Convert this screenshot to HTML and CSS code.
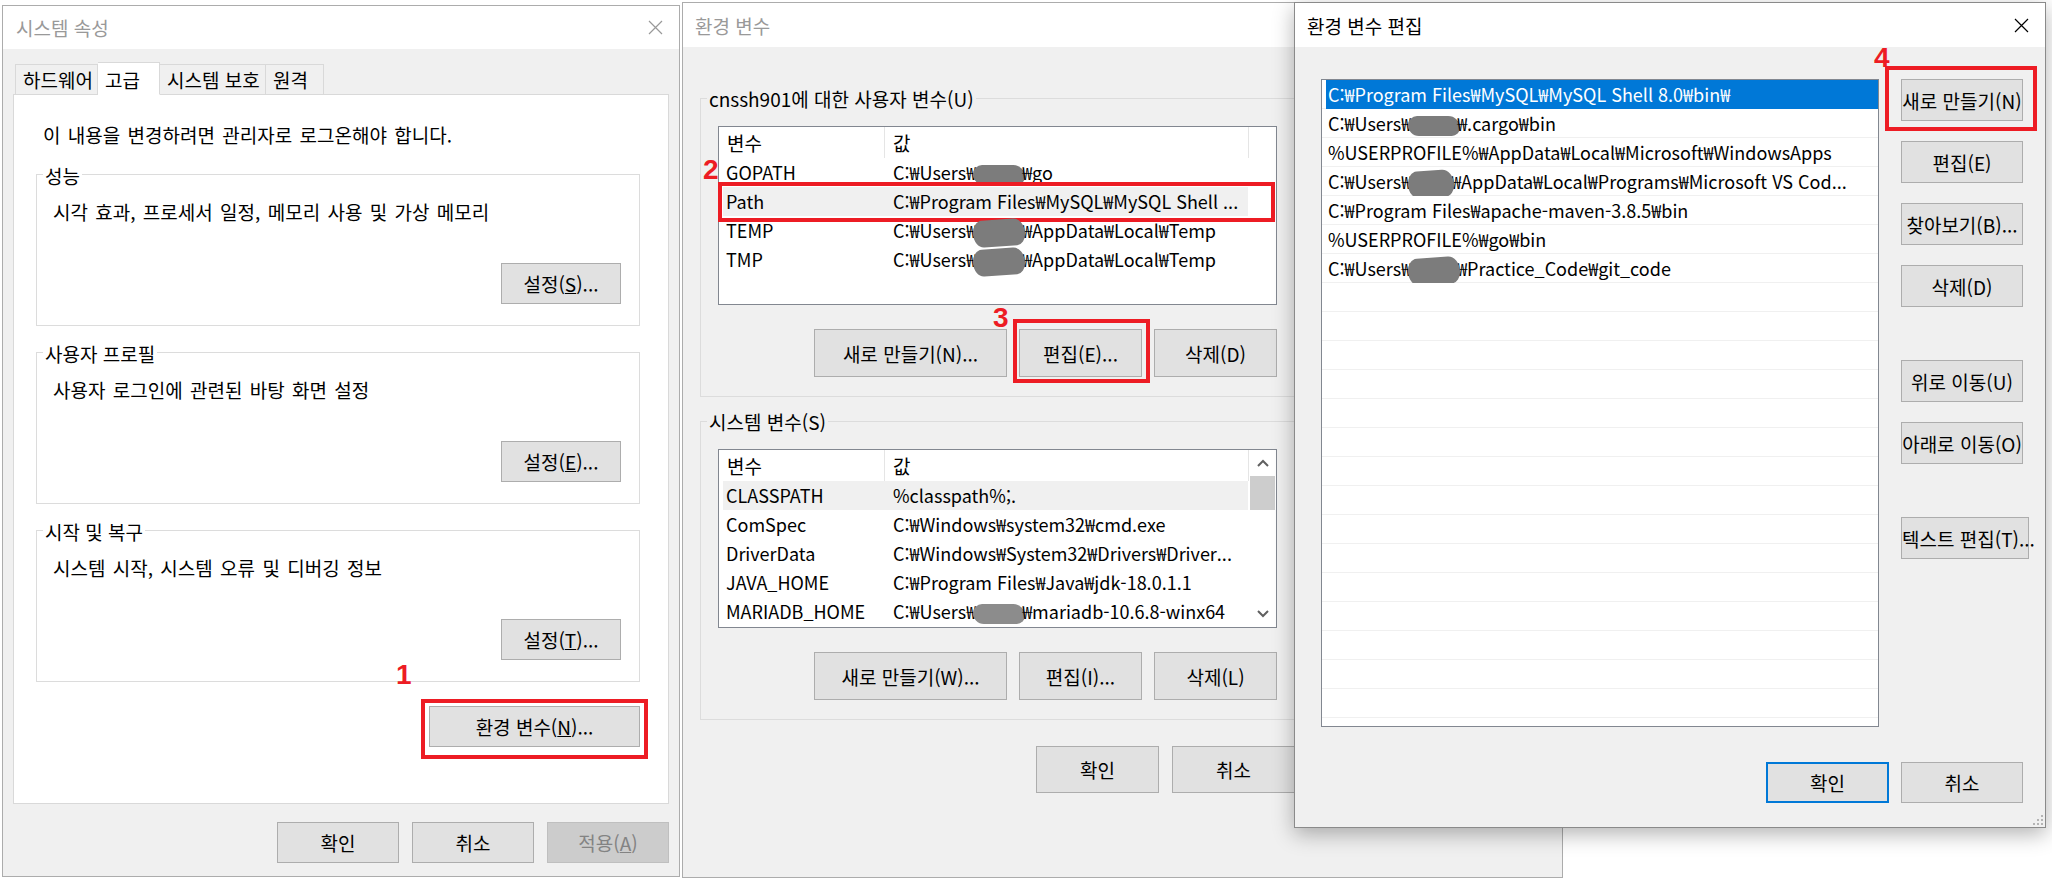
FILE: index.html
```html
<!DOCTYPE html>
<html lang="ko">
<head>
  <meta charset="UTF-8" />
  <title>환경 변수 편집</title>
  <link rel="stylesheet" href="styles.css">
</head>
<body>
<div class="desktop">

  <!-- 시스템 속성 -->
  <section class="win win-system">
    <header class="titlebar">
      <span class="title">시스템 속성</span>
      <svg class="close" viewBox="0 0 15 15"><path d="M1 1L14 14M14 1L1 14" stroke="currentColor" stroke-width="1.2" fill="none"/></svg>
    </header>
    <div class="sys-body">
      <div class="tabs">
        <div class="tab tab-hw">하드웨어</div>
        <div class="tab tab-adv is-active">고급</div>
        <div class="tab tab-protect">시스템 보호</div>
        <div class="tab tab-remote">원격</div>
      </div>
      <div class="tab-panel">
        <p class="intro">이 내용을 변경하려면 관리자로 로그온해야 합니다.</p>

        <div class="group sys-group">
          <span class="group-label">성능</span>
          <p class="group-desc">시각 효과, 프로세서 일정, 메모리 사용 및 가상 메모리</p>
          <div class="group-actions"><button class="btn btn-settings">설정(<u>S</u>)...</button></div>
        </div>

        <div class="group sys-group">
          <span class="group-label">사용자 프로필</span>
          <p class="group-desc">사용자 로그인에 관련된 바탕 화면 설정</p>
          <div class="group-actions"><button class="btn btn-settings">설정(<u>E</u>)...</button></div>
        </div>

        <div class="group sys-group">
          <span class="group-label">시작 및 복구</span>
          <p class="group-desc">시스템 시작, 시스템 오류 및 디버깅 정보</p>
          <div class="group-actions"><button class="btn btn-settings">설정(<u>T</u>)...</button></div>
        </div>

        <div class="env-row">
          <button class="btn btn-env mark mark-env">환경 변수(<u>N</u>)...<span class="step">1</span></button>
        </div>
      </div>
      <div class="dialog-buttons">
        <button class="btn btn-dialog">확인</button>
        <button class="btn btn-dialog">취소</button>
        <button class="btn btn-dialog" disabled>적용(<u>A</u>)</button>
      </div>
    </div>
  </section>

  <!-- 환경 변수 -->
  <section class="win win-env">
    <header class="titlebar">
      <span class="title">환경 변수</span>
    </header>
    <div class="env-body">
      <div class="env-col">

        <div class="group env-group">
          <span class="group-label">cnssh901에 대한 사용자 변수(U)</span>
          <div class="var-list">
            <div class="var-table">
              <div class="var-head"><span class="cell-name">변수</span><span class="cell-value">값</span></div>
              <div class="var-row"><span class="cell-name">GOPATH</span><span class="cell-value">C:₩Users₩<span class="blob"></span>₩go</span></div>
              <div class="var-row is-selected mark mark-row"><span class="cell-name">Path</span><span class="cell-value">C:₩Program Files₩MySQL₩MySQL Shell ...</span><span class="step">2</span></div>
              <div class="var-row"><span class="cell-name">TEMP</span><span class="cell-value">C:₩Users₩<span class="blob blob-tall"></span>₩AppData₩Local₩Temp</span></div>
              <div class="var-row"><span class="cell-name">TMP</span><span class="cell-value">C:₩Users₩<span class="blob blob-tall"></span>₩AppData₩Local₩Temp</span></div>
            </div>
          </div>
          <div class="list-actions">
            <button class="btn btn-wide">새로 만들기(N)...</button>
            <button class="btn mark mark-edit">편집(E)...<span class="step">3</span></button>
            <button class="btn">삭제(D)</button>
          </div>
        </div>

        <div class="group env-group">
          <span class="group-label">시스템 변수(S)</span>
          <div class="var-list">
            <div class="var-table">
              <div class="var-head"><span class="cell-name">변수</span><span class="cell-value">값</span></div>
              <div class="var-row is-selected"><span class="cell-name">CLASSPATH</span><span class="cell-value">%classpath%;.</span></div>
              <div class="var-row"><span class="cell-name">ComSpec</span><span class="cell-value">C:₩Windows₩system32₩cmd.exe</span></div>
              <div class="var-row"><span class="cell-name">DriverData</span><span class="cell-value">C:₩Windows₩System32₩Drivers₩Driver...</span></div>
              <div class="var-row"><span class="cell-name">JAVA_HOME</span><span class="cell-value">C:₩Program Files₩Java₩jdk-18.0.1.1</span></div>
              <div class="var-row"><span class="cell-name">MARIADB_HOME</span><span class="cell-value">C:₩Users₩<span class="blob blob-light"></span>₩mariadb-10.6.8-winx64</span></div>
            </div>
            <div class="scrollbar">
              <div class="scroll-arrow"><svg viewBox="0 0 12 8"><path d="M1 7L6 2L11 7" stroke="#606060" stroke-width="2" fill="none"/></svg></div>
              <div class="scroll-thumb"></div>
              <div class="scroll-track"></div>
              <div class="scroll-arrow"><svg viewBox="0 0 12 8"><path d="M1 1L6 6L11 1" stroke="#606060" stroke-width="2" fill="none"/></svg></div>
            </div>
          </div>
          <div class="list-actions">
            <button class="btn btn-wide">새로 만들기(W)...</button>
            <button class="btn">편집(I)...</button>
            <button class="btn">삭제(L)</button>
          </div>
        </div>

        <div class="env-footer">
          <button class="btn">확인</button>
          <button class="btn">취소</button>
        </div>
      </div>
    </div>
  </section>

  <!-- 환경 변수 편집 -->
  <section class="win win-edit">
    <header class="titlebar">
      <span class="title">환경 변수 편집</span>
      <svg class="close" viewBox="0 0 15 15"><path d="M1 1L14 14M14 1L1 14" stroke="currentColor" stroke-width="1.2" fill="none"/></svg>
    </header>
    <div class="edit-body">
      <div class="edit-main">
        <div class="path-list">
          <div class="path-row is-selected">C:₩Program Files₩MySQL₩MySQL Shell 8.0₩bin₩</div>
          <div class="path-row">C:₩Users₩<span class="blob"></span>₩.cargo₩bin</div>
          <div class="path-row">%USERPROFILE%₩AppData₩Local₩Microsoft₩WindowsApps</div>
          <div class="path-row">C:₩Users₩<span class="blob blob-tall blob-narrow"></span>₩AppData₩Local₩Programs₩Microsoft VS Cod...</div>
          <div class="path-row">C:₩Program Files₩apache-maven-3.8.5₩bin</div>
          <div class="path-row">%USERPROFILE%₩go₩bin</div>
          <div class="path-row">C:₩Users₩<span class="blob blob-tall"></span>₩Practice_Code₩git_code</div>
        </div>
        <div class="edit-actions">
          <button class="btn mark mark-new">새로 만들기(N)<span class="step">4</span></button>
          <button class="btn">편집(E)</button>
          <button class="btn">찾아보기(B)...</button>
          <button class="btn">삭제(D)</button>
          <button class="btn push">위로 이동(U)</button>
          <button class="btn">아래로 이동(O)</button>
          <button class="btn push btn-text">텍스트 편집(T)...</button>
        </div>
      </div>
      <div class="edit-footer">
        <button class="btn btn-default">확인</button>
        <button class="btn">취소</button>
      </div>
    </div>
    <svg class="grip" viewBox="0 0 11 11">
      <rect x="9" y="1" width="2" height="2" fill="#b4b4b4"/>
      <rect x="5" y="5" width="2" height="2" fill="#b4b4b4"/>
      <rect x="9" y="5" width="2" height="2" fill="#b4b4b4"/>
      <rect x="1" y="9" width="2" height="2" fill="#b4b4b4"/>
      <rect x="5" y="9" width="2" height="2" fill="#b4b4b4"/>
      <rect x="9" y="9" width="2" height="2" fill="#b4b4b4"/>
    </svg>
  </section>

</div>
</body>
</html>
```

FILE: styles.css
```css
* {
  box-sizing: border-box;
}
body {
  margin: 0;
  width: 2052px;
  height: 886px;
  overflow: hidden;
  background: #fff;
  color: #000;
  font-family: "Noto Sans CJK KR", "Noto Sans", sans-serif;
  font-size: 19px;
}
p {
  margin: 0;
}
.desktop {
  position: relative;
  width: 2052px;
  height: 886px;
}

/* windows */
.win {
  position: absolute;
  display: flex;
  flex-direction: column;
  background: #f0f0f0;
  border: 1px solid #acacac;
}
.win-system {
  left: 2px;
  top: 5px;
  width: 678px;
  height: 872px;
}
.win-env {
  left: 682px;
  top: 2px;
  width: 881px;
  height: 876px;
}
.win-edit {
  left: 1294px;
  top: 2px;
  width: 752px;
  height: 826px;
  border-color: #8a8a8a;
  box-shadow: 0 6px 20px rgba(0, 0, 0, 0.3);
}
.titlebar {
  flex: none;
  height: 44px;
  display: flex;
  align-items: center;
  justify-content: space-between;
  padding: 0 16px 0 12px;
  background: #fff;
  color: #999;
}
.win-system .titlebar {
  height: 43px;
  padding-left: 13px;
}
.win-edit .titlebar {
  color: #000;
}
.close {
  width: 15px;
  height: 15px;
}

/* buttons */
.btn {
  height: 41px;
  padding: 0;
  border: 1px solid #adadad;
  background: #e1e1e1;
  color: #000;
  font: inherit;
  white-space: nowrap;
}
.btn:disabled {
  background: #cccccc;
  border-color: #bfbfbf;
  color: #838383;
}
.btn-default {
  border: 2px solid #0078d7;
}

/* group boxes */
.group {
  position: relative;
  border: 1px solid #dcdcdc;
}
.group-label {
  position: absolute;
  top: -10px;
  left: 6px;
  padding: 0 2px;
  line-height: 22px;
  background: #fff;
  white-space: nowrap;
}

/* 시스템 속성 */
.sys-body {
  flex: 1;
  display: flex;
  flex-direction: column;
  padding: 13px 10px 0;
}
.tabs {
  position: relative;
  z-index: 1;
  display: flex;
  align-items: flex-end;
  height: 33px;
  margin-bottom: -1px;
  padding-left: 2px;
}
.tab {
  height: 31px;
  padding-left: 7px;
  line-height: 29px;
  background: #f0f0f0;
  border: 1px solid #d9d9d9;
  border-left: none;
  white-space: nowrap;
}
.tab:first-child {
  border-left: 1px solid #d9d9d9;
}
.tab.is-active {
  height: 33px;
  padding-top: 2px;
  background: #fff;
  border-bottom-color: #fff;
}
.tab-hw { width: 83px; }
.tab-adv { width: 62px; }
.tab-protect { width: 106px; }
.tab-remote { width: 58px; }

.tab-panel {
  height: 710px;
  padding: 27px 28px 0 22px;
  background: #fff;
  border: 1px solid #d9d9d9;
}
.intro,
.group-desc {
  word-spacing: 2px;
}
.intro {
  margin: 0 0 3px 7px;
  line-height: 26px;
}
.sys-group {
  margin-top: 26px;
  padding: 24px 18px 21px 16px;
}
.group-desc {
  line-height: 26px;
}
.group-actions,
.env-row {
  display: flex;
  justify-content: flex-end;
}
.group-actions {
  margin-top: 38px;
}
.btn-settings {
  width: 120px;
}
.env-row {
  margin-top: 24px;
}
.btn-env {
  width: 211px;
}
.dialog-buttons {
  display: flex;
  justify-content: flex-end;
  gap: 13px;
  margin-top: 18px;
}
.btn-dialog {
  width: 122px;
}

/* 환경 변수 */
.env-body {
  padding: 51px 0 0 17px;
}
.env-col {
  width: 595px;
}
.env-group {
  padding: 27px 17px 19px;
}
.env-group + .env-group {
  margin-top: 24px;
}
.env-group .group-label {
  top: -11px;
  background: #f0f0f0;
}
.var-list {
  position: relative;
  display: flex;
  height: 179px;
  background: #fff;
  border: 1px solid #828790;
}
.var-table {
  flex: 1;
}
.var-head {
  display: flex;
  height: 31px;
  line-height: 31px;
}
.var-head .cell-name {
  width: 166px;
  padding-left: 8px;
  border-right: 1px solid #e5e5e5;
}
.var-head .cell-value {
  width: 364px;
  padding-left: 8px;
  border-right: 1px solid #e5e5e5;
}
.var-row {
  display: flex;
  width: 525px;
  height: 29px;
  margin-left: 4px;
  font-size: 18px;
  line-height: 29px;
  white-space: nowrap;
}
.var-row .cell-name {
  width: 162px;
  padding-left: 3px;
}
.var-row .cell-value {
  width: 363px;
  padding-left: 8px;
}
.var-row.is-selected {
  background: #f0f0f0;
}
.scrollbar {
  display: flex;
  flex-direction: column;
  width: 27px;
  background: #fff;
}
.scroll-arrow {
  display: flex;
  align-items: center;
  justify-content: center;
  height: 26px;
}
.scroll-arrow svg {
  width: 12px;
  height: 8px;
}
.scroll-thumb {
  height: 34px;
  margin: 0 1px;
  background: #cdcdcd;
}
.scroll-track {
  flex: 1;
}
.list-actions {
  display: flex;
  justify-content: flex-end;
  gap: 12px;
  margin-top: 24px;
}
.list-actions .btn {
  width: 123px;
  height: 48px;
}
.list-actions .btn-wide {
  width: 193px;
}
.env-footer {
  display: flex;
  justify-content: flex-end;
  gap: 13px;
  margin-top: 26px;
}
.env-footer .btn {
  width: 123px;
  height: 47px;
}

/* 환경 변수 편집 */
.edit-body {
  flex: 1;
  display: flex;
  flex-direction: column;
  padding: 32px 22px 0 26px;
}
.edit-main {
  display: flex;
  gap: 22px;
}
.path-list {
  width: 558px;
  height: 648px;
  border: 1px solid #828790;
  background: repeating-linear-gradient(#fff 0 28px, #f0f0f0 28px 29px);
}
.path-row {
  height: 29px;
  margin-left: 4px;
  padding-left: 2px;
  font-size: 18px;
  line-height: 29px;
  white-space: nowrap;
  overflow: hidden;
}
.path-row.is-selected {
  background: #0078d7;
  color: #fff;
}
.edit-actions {
  display: flex;
  flex-direction: column;
  gap: 20px;
  width: 122px;
}
.edit-actions .btn {
  width: 122px;
  height: 42px;
}
.edit-actions .push {
  margin-top: 33px;
}
.edit-actions .btn-text {
  width: 128px;
}
.edit-footer {
  display: flex;
  justify-content: flex-end;
  gap: 12px;
  margin-top: 35px;
}
.edit-footer .btn {
  width: 122px;
}
.edit-footer .btn-default {
  width: 123px;
}
.grip {
  position: absolute;
  right: 2px;
  bottom: 2px;
  width: 11px;
  height: 11px;
}

/* censored names */
.blob {
  display: inline-block;
  width: 52px;
  height: 20px;
  margin: 0 -3px;
  vertical-align: -5px;
  border-radius: 10px 13px 9px 12px;
  background: #7c7c7c;
}
.blob-tall {
  transform: scaleY(1.35) rotate(-3deg);
}
.blob-narrow {
  width: 46px;
}
.blob-light {
  background: #8c8c8c;
}

/* red annotations */
.mark {
  position: relative;
}
.mark::after {
  content: "";
  position: absolute;
  border: 4px solid #ed1c24;
  pointer-events: none;
}
.step {
  position: absolute;
  font: bold 28px/28px "Liberation Sans", Arial, sans-serif;
  color: #ed1c24;
}
.mark-env::after { top: -8px; left: -9px; right: -9px; bottom: -13px; }
.mark-env .step { left: -34px; top: -46px; }
.mark-row::after { top: -5px; left: -5px; right: -27px; bottom: -6px; }
.mark-row .step { left: -20px; top: -31px; }
.mark-edit::after { top: -11px; left: -7px; right: -9px; bottom: -7px; }
.mark-edit .step { left: -27px; top: -26px; }
.mark-new::after { top: -14px; left: -17px; right: -15px; bottom: -11px; }
.mark-new .step { left: -28px; top: -36px; }
```
